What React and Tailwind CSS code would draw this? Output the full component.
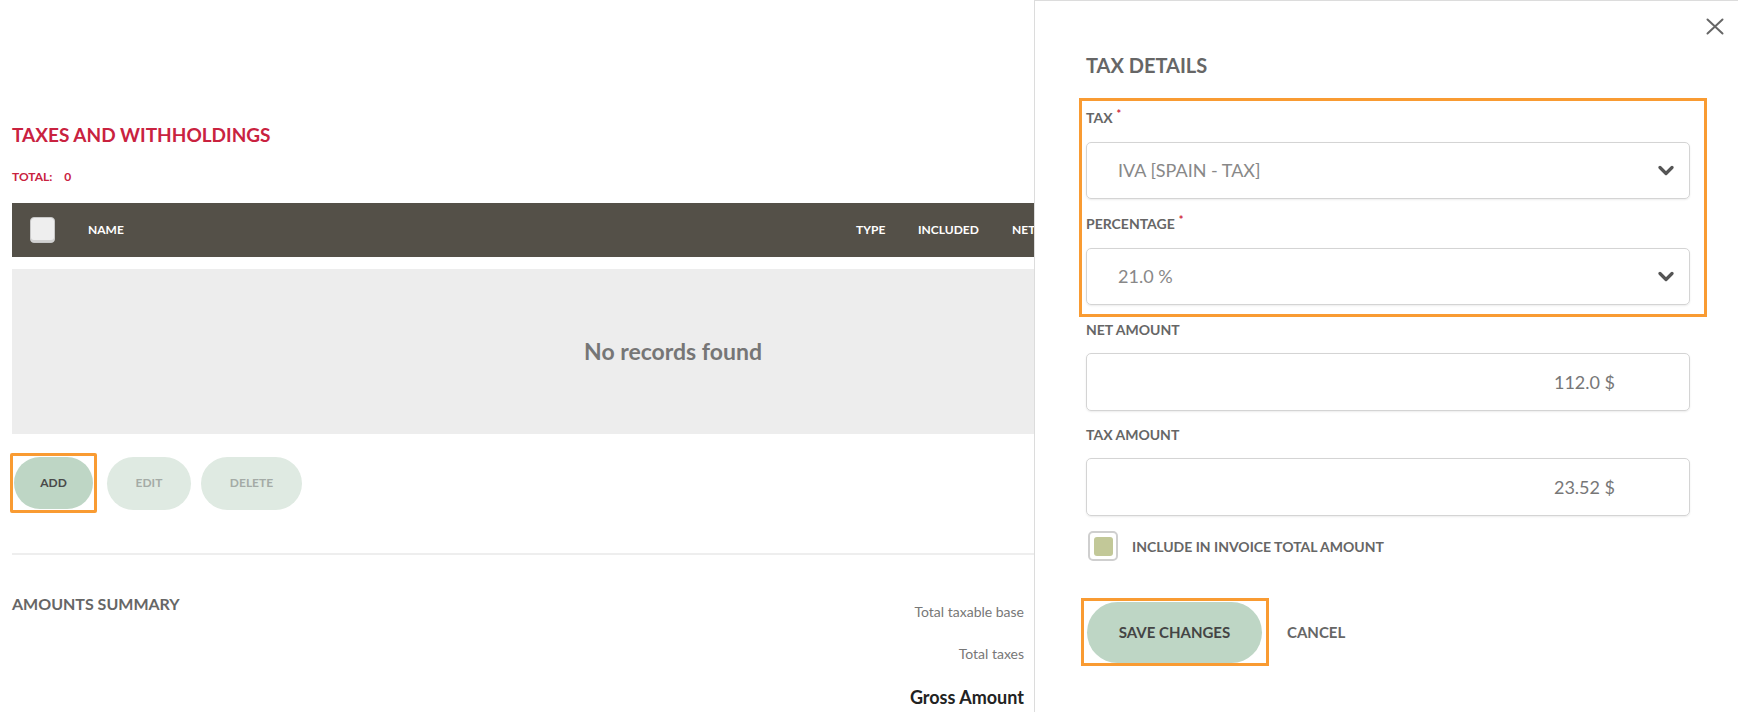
const Campo = ({ label, requerido, children, className = '' }) => (
  <div className={className}>
    <div className="h-[20px] leading-[20px] text-[14px] font-bold text-[#666] uppercase">
      {label}
      {requerido && <sup className="ml-[4px] text-[11px] text-[#d0283c]">*</sup>}
    </div>
    {children}
  </div>
);

const Chevron = () => (
  <svg width="16" height="11" viewBox="0 0 16 11" fill="none" className="text-[#555]">
    <polyline points="2,2.5 8,8.5 14,2.5" stroke="currentColor" strokeWidth="3.2" strokeLinecap="round" strokeLinejoin="round" />
  </svg>
);

const Selector = ({ valor }) => (
  <div className="mt-[14px] h-[57px] w-[604px] rounded-[5px] border border-[#d4d4d4] shadow-[0_1px_2px_rgba(0,0,0,0.08)] flex items-center justify-between pl-[31px] pr-[15px]">
    <span className="text-[18px] text-[#888]">{valor}</span>
    <Chevron />
  </div>
);

const Importe = ({ valor }) => (
  <div className="mt-[13px] h-[58px] w-[604px] rounded-[5px] border border-[#d4d4d4] shadow-[0_1px_2px_rgba(0,0,0,0.08)] flex items-center justify-end pr-[74px]">
    <span className="text-[18px] text-[#777]">{valor}</span>
  </div>
);

export default function App() {
  return (
    <div className="relative w-full h-[712px] overflow-hidden bg-white font-[Lato,sans-serif]">
      {/* Contenido principal */}
      <div className="ml-[12px] w-[1322px] pt-[123px]">
        <h1 className="text-[19px] leading-[24px] font-bold text-[#c9223f] uppercase">
          Taxes and withholdings
        </h1>
        <div className="mt-[22px] text-[12px] leading-[16px] font-bold text-[#c9223f] flex">
          <span>TOTAL:</span>
          <span className="ml-[12px]">0</span>
        </div>

        {/* Cabecera de tabla */}
        <div className="mt-[18px] h-[54px] bg-[#545048] flex items-center pl-[18px] text-[12px] font-bold text-white uppercase">
          <div className="w-[25px] h-[26px] rounded-[4px] bg-[#eeeeee] border border-[#c8c8c8] shadow-[inset_0_-2px_0_rgba(0,0,0,0.12)]" />
          <div className="ml-[33px] w-[768px]">Name</div>
          <div className="w-[62px]">Type</div>
          <div className="w-[94px]">Included</div>
          <div className="w-[22px] overflow-hidden whitespace-nowrap">Net amount</div>
        </div>

        <div className="mt-[12px] h-[165px] bg-[#ededed] flex items-center justify-center">
          <span className="text-[23px] font-bold text-[#767676]">No records found</span>
        </div>

        {/* Botones */}
        <div className="mt-[19px] flex items-center gap-[10px] text-[12px] font-bold uppercase">
          <div className="-ml-[2px] border-[3px] border-[#f99b32] p-[1px] rounded-[2px]">
            <button className="h-[52px] w-[79px] rounded-full bg-[#bed6c5] text-[#4a4a4a]">ADD</button>
          </div>
          <button className="h-[53px] w-[84px] rounded-full bg-[#dfeae2] text-[#a4aba6]">EDIT</button>
          <button className="h-[53px] w-[101px] rounded-full bg-[#dfeae2] text-[#a4aba6]">DELETE</button>
        </div>

        <div className="mt-[40px] h-[2px] bg-[#eeeeee]" />

        {/* Resumen */}
        <div className="w-[1012px] flex justify-between pt-[39px]">
          <h2 className="text-[16px] leading-[20px] font-bold text-[#666] uppercase">Amounts summary</h2>
          <div className="mt-[8px] flex flex-col items-end gap-[22px]">
            <span className="text-[14px] leading-[20px] text-[#777]">Total taxable base</span>
            <span className="text-[14px] leading-[20px] text-[#777]">Total taxes</span>
            <span className="text-[18px] leading-[22px] font-bold text-[#222]">Gross Amount</span>
          </div>
        </div>
      </div>

      {/* Panel lateral */}
      <div className="absolute top-0 right-0 h-full w-[704px] bg-white border-l border-t border-[#dcdcdc] pl-[51px] pt-[52px]">
        <button className="absolute top-[17px] right-[14px] text-[#666]">
          <svg width="18" height="17" viewBox="0 0 18 17" fill="none">
            <path d="M1.5 1.5 L16.5 15.5 M16.5 1.5 L1.5 15.5" stroke="currentColor" strokeWidth="2" strokeLinecap="round" />
          </svg>
        </button>

        <h2 className="text-[20px] leading-[24px] font-bold text-[#666] uppercase">Tax details</h2>

        <div className="-ml-[7px] mt-[21px] w-[628px] border-[3px] border-[#f99b32] pl-[4px] pt-[7px] pb-[9px]">
          <Campo label="Tax" requerido>
            <Selector valor="IVA [SPAIN - TAX]" />
          </Campo>
          <Campo label="Percentage" requerido className="mt-[15px]">
            <Selector valor="21.0 %" />
          </Campo>
        </div>

        <Campo label="Net amount" className="mt-[3px]">
          <Importe valor="112.0 $" />
        </Campo>
        <Campo label="Tax amount" className="mt-[14px]">
          <Importe valor="23.52 $" />
        </Campo>

        <div className="mt-[15px] flex items-center">
          <div className="ml-[2px] w-[30px] h-[30px] rounded-[5px] border-2 border-[#cfcfcf] flex items-center justify-center">
            <div className="w-[19px] h-[19px] rounded-[3px] bg-[#c2c898]" />
          </div>
          <span className="ml-[14px] text-[14px] font-bold text-[#666] uppercase">Include in invoice total amount</span>
        </div>

        <div className="mt-[37px] flex items-center">
          <div className="-ml-[5px] border-[3px] border-[#f99b32] pl-[3px] pr-[4px] pt-[1px]">
            <button className="h-[61px] w-[175px] rounded-full bg-[#bed6c5] text-[15px] font-bold text-[#444] uppercase">
              Save changes
            </button>
          </div>
          <button className="ml-[18px] text-[15px] font-bold text-[#666] uppercase">Cancel</button>
        </div>
      </div>
    </div>
  );
}
